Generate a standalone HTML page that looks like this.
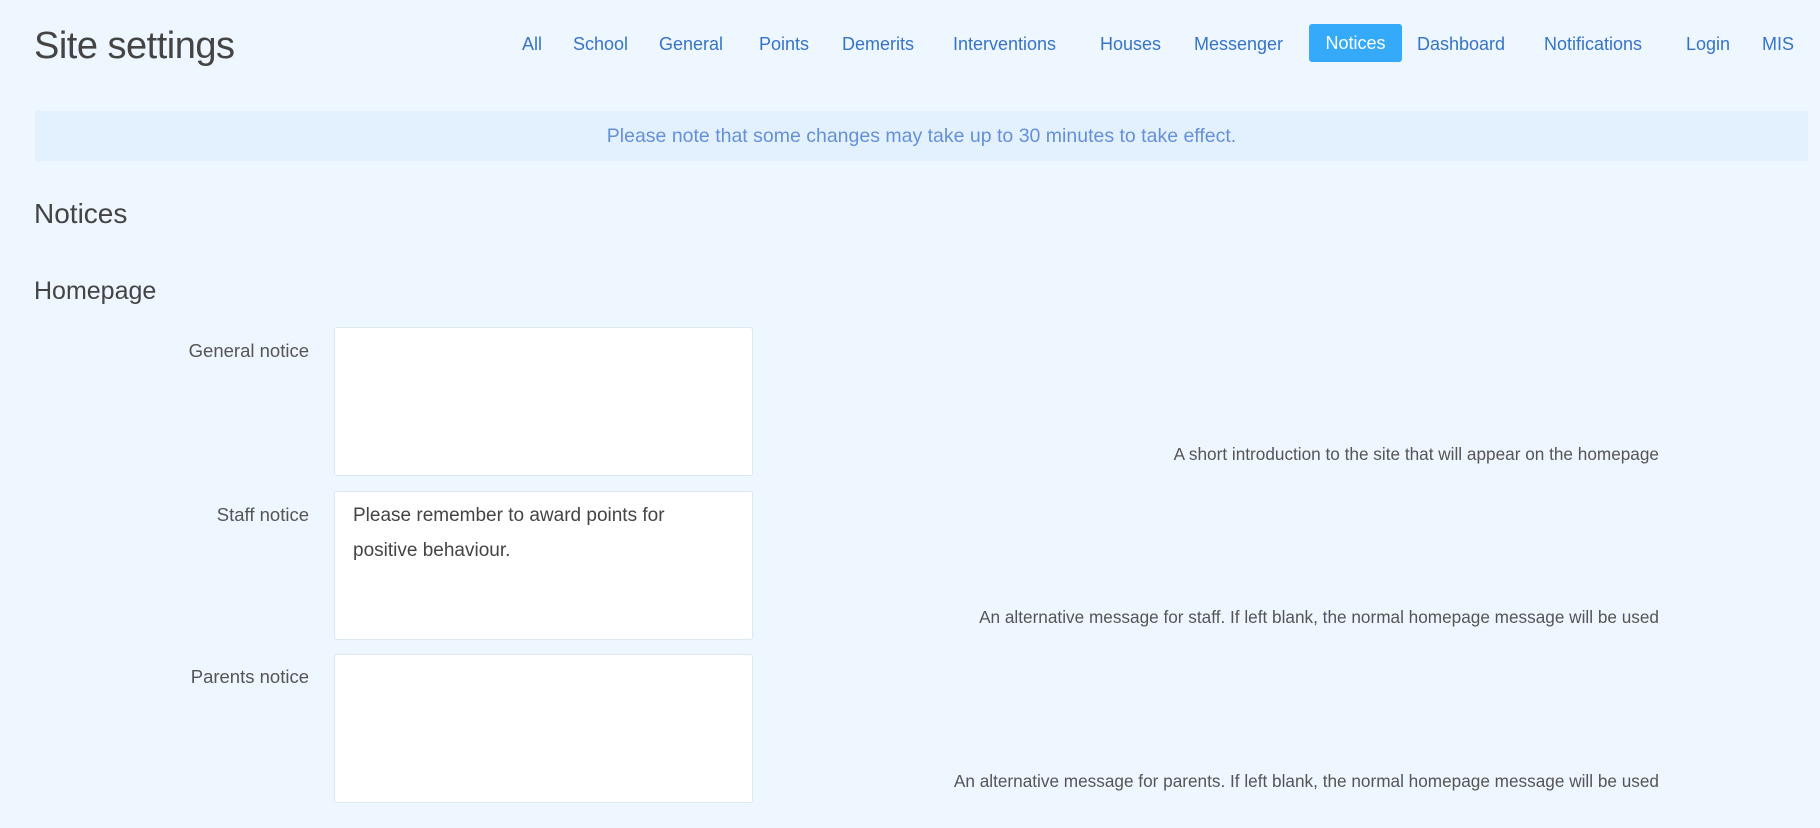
<!DOCTYPE html>
<html><head><meta charset="utf-8">
<style>
html,body{margin:0;padding:0;}
body{width:1820px;height:828px;background:#eef6ff;font-family:"Liberation Sans",sans-serif;position:relative;overflow:hidden;}
h1{position:absolute;left:34px;top:25px;margin:0;font-weight:normal;font-size:38px;color:#444;letter-spacing:-0.5px;}
.nav{position:absolute;top:33px;font-size:18px;color:#3574c8;line-height:22px;}
.btn{position:absolute;left:1309px;top:24px;width:93px;height:38px;background:#35aafa;border-radius:3px;color:#fff;font-size:18px;line-height:38px;text-align:center;}
.banner{position:absolute;left:35px;top:111px;width:1773px;height:50px;background:#e3f1fe;color:#6590d8;font-size:19.5px;line-height:50px;text-align:center;}
.h2{position:absolute;left:34px;font-weight:normal;color:#444;}
.lbl{position:absolute;right:1511px;font-size:18.5px;color:#555;}
.ta{position:absolute;left:334px;width:419px;height:149px;background:#fff;border:1px solid #dde8f2;border-radius:3px;box-sizing:border-box;}
.help{position:absolute;right:161px;font-size:17.2px;color:#555;}
.txt{position:absolute;left:353px;font-size:19px;color:#444;line-height:35px;}
</style></head><body>
<h1>Site settings</h1>
<div class="nav" style="left:522px">All</div>
<div class="nav" style="left:573px">School</div>
<div class="nav" style="left:659px">General</div>
<div class="nav" style="left:759px">Points</div>
<div class="nav" style="left:842px">Demerits</div>
<div class="nav" style="left:953px">Interventions</div>
<div class="nav" style="left:1100px">Houses</div>
<div class="nav" style="left:1194px">Messenger</div>
<div class="btn">Notices</div>
<div class="nav" style="left:1417px">Dashboard</div>
<div class="nav" style="left:1544px">Notifications</div>
<div class="nav" style="left:1686px">Login</div>
<div class="nav" style="left:1762px">MIS</div>
<div class="banner">Please note that some changes may take up to 30 minutes to take effect.</div>
<div class="h2" style="top:198px;font-size:28px">Notices</div>
<div class="h2" style="top:277px;font-size:25px">Homepage</div>

<div class="lbl" style="top:340px">General notice</div>
<div class="ta" style="top:327px"></div>
<div class="help" style="top:444px">A short introduction to the site that will appear on the homepage</div>

<div class="lbl" style="top:504px">Staff notice</div>
<div class="ta" style="top:491px"></div>
<div class="txt" style="top:498px">Please remember to award points for<br>positive behaviour.</div>
<div class="help" style="top:607px">An alternative message for staff. If left blank, the normal homepage message will be used</div>

<div class="lbl" style="top:666px">Parents notice</div>
<div class="ta" style="top:654px"></div>
<div class="help" style="top:771px">An alternative message for parents. If left blank, the normal homepage message will be used</div>
</body></html>
